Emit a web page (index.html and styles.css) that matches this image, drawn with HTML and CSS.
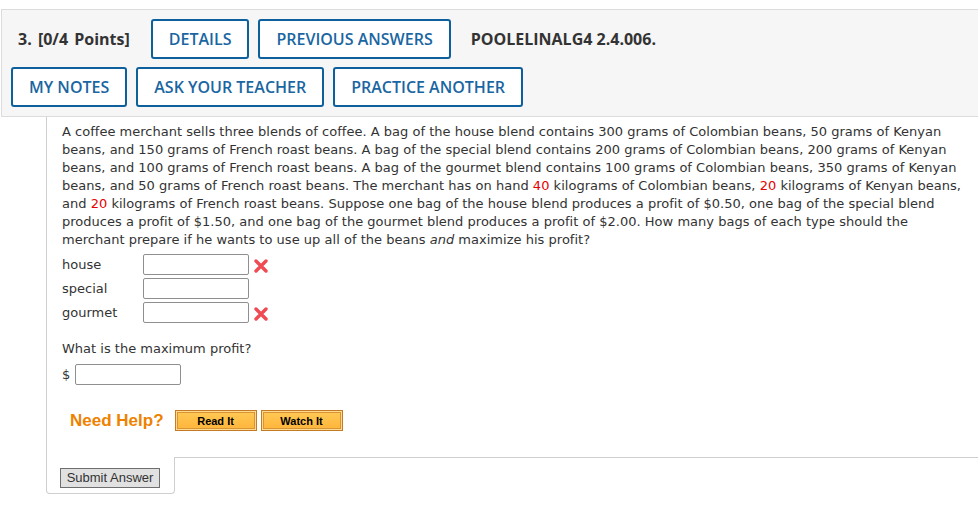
FILE: index.html
```html
<!DOCTYPE html>
<html>
<head>
<meta charset="utf-8">
<link rel="stylesheet" href="styles.css">
</head>
<body>
<div class="page">
  <div class="qhead">
    <div class="row">
      <div class="qnum"><span class="n">3.</span> <span>[0/4 Points]</span></div>
      <button class="btn">DETAILS</button>
      <button class="btn">PREVIOUS ANSWERS</button>
      <div class="code">POOLELINALG4 2.4.006.</div>
    </div>
    <div class="row">
      <button class="btn">MY NOTES</button>
      <button class="btn">ASK YOUR TEACHER</button>
      <button class="btn">PRACTICE ANOTHER</button>
    </div>
  </div>
  <div class="qbody">
    <p class="text">A coffee merchant sells three blends of coffee. A bag of the house blend contains 300 grams of Colombian beans, 50 grams of Kenyan<br>beans, and 150 grams of French roast beans. A bag of the special blend contains 200 grams of Colombian beans, 200 grams of Kenyan<br>beans, and 100 grams of French roast beans. A bag of the gourmet blend contains 100 grams of Colombian beans, 350 grams of Kenyan<br>beans, and 50 grams of French roast beans. The merchant has on hand <span class="red">40</span> kilograms of Colombian beans, <span class="red">20</span> kilograms of Kenyan beans,<br>and <span class="red">20</span> kilograms of French roast beans. Suppose one bag of the house blend produces a profit of $0.50, one bag of the special blend<br>produces a profit of $1.50, and one bag of the gourmet blend produces a profit of $2.00. How many bags of each type should the<br>merchant prepare if he wants to use up all of the beans <em>and</em> maximize his profit?</p>
    <div class="answers">
      <div class="arow"><span class="lbl">house</span><input class="inp" type="text"><svg class="x" width="16" height="16" viewBox="0 0 16 16"><path d="M3 3 L13 13 M13 3 L3 13" stroke="#f04a52" stroke-width="3.4" stroke-linecap="round"/></svg></div>
      <div class="arow"><span class="lbl">special</span><input class="inp" type="text"></div>
      <div class="arow"><span class="lbl">gourmet</span><input class="inp" type="text"><svg class="x" width="16" height="16" viewBox="0 0 16 16"><path d="M3 3 L13 13 M13 3 L3 13" stroke="#f04a52" stroke-width="3.4" stroke-linecap="round"/></svg></div>
    </div>
    <p class="q2">What is the maximum profit?</p>
    <div class="prow"><span>$</span><input class="inp" type="text"></div>
    <div class="help">
      <span class="needhelp">Need Help?</span>
      <button class="hbtn">Read It</button>
      <button class="hbtn">Watch It</button>
    </div>
  </div>
  <div class="foot">
    <div class="tab"><button class="submit">Submit Answer</button></div>
    <div class="rest"></div>
  </div>
</div>
</body>
</html>
```
FILE: styles.css
```css
html, body { margin: 0; padding: 0; background: #fff; }
body { font-family: "DejaVu Sans", Verdana, sans-serif; color: #333; }
.page { padding-top: 9px; }
.qhead {
  margin-left: 1px;
  width: 1000px;
  background: #f6f6f6;
  border: 1px solid #dcdcdc;
  padding: 9px 0 9px 9px;
  display: flex;
  flex-direction: column;
  gap: 8px;
  font-family: "Open Sans", sans-serif;
}
.row { display: flex; align-items: center; gap: 9px; }
.qnum { font-weight: 700; font-size: 16px; color: #333; padding-left: 7px; margin-right: 12px; white-space: nowrap; word-spacing: 2px; }
.code { font-weight: 700; font-size: 16px; color: #333; margin-left: 11px; white-space: nowrap; }
.btn {
  font-family: "Open Sans", sans-serif;
  font-size: 16px;
  font-weight: 600;
  color: #1a66a2;
  background: #fff;
  border: 2px solid #0e609d;
  border-radius: 3px;
  height: 40px;
  padding: 0 16px;
  white-space: nowrap;
  cursor: pointer;
}
.qbody {
  margin-left: 46px;
  border-left: 1px solid #cfcfcf;
  padding: 6px 0 0 15px;
  height: 334px;
  font-size: 13px;
}
.text { margin: 0; line-height: 18px; white-space: nowrap; font-size: 13px; letter-spacing: 0.02px; }
.red { color: #e60000; }
.answers { margin-top: 5px; display: flex; flex-direction: column; gap: 3px; }
.arow { display: flex; align-items: center; height: 21px; }
.lbl { width: 81px; }
.inp {
  width: 106px; height: 21px; box-sizing: border-box;
  border: 1px solid #8f8f8f; border-radius: 2px; padding: 0; margin: 0; background: #fff;
}
.x { margin-left: 4px; margin-top: 3px; }
.q2 { margin: 17px 0 0; line-height: 18px; }
.prow { display: flex; align-items: center; gap: 5px; margin-top: 6px; }
.prow .inp { width: 106px; }
.help { display: flex; align-items: center; margin-top: 25px; padding-left: 8px; }
.needhelp { font-family: "Liberation Sans", Arial, sans-serif; font-weight: 700; font-size: 17px; color: #ee8200; margin-right: 11px; }
.hbtn {
  font-family: "Liberation Sans", Arial, sans-serif; font-weight: 700; font-size: 11px; color: #000;
  width: 82px; height: 21px; margin-right: 4px; padding: 0;
  background: linear-gradient(#ffca55, #ffb43a);
  border: 1px solid #c47c24;
  box-shadow: inset 0 0 0 1px #ffd98f, inset 0 0 0 2px #d89536;
}
.foot { display: flex; margin-left: 46px; height: 37px; }
.tab {
  width: 129px; border: 1px solid #cfcfcf; border-top: none; border-radius: 0 0 4px 4px;
  padding: 10px 0 0 13px; box-sizing: border-box;
}
.rest { flex: 1; border-top: 1px solid #cfcfcf; }
.submit {
  font-family: "Liberation Sans", Arial, sans-serif; font-size: 13px; color: #333;
  height: 20px; width: 100px; padding: 0; background: #e1e1e1; border: 1px solid #6e6e6e; border-radius: 0;
}
```
